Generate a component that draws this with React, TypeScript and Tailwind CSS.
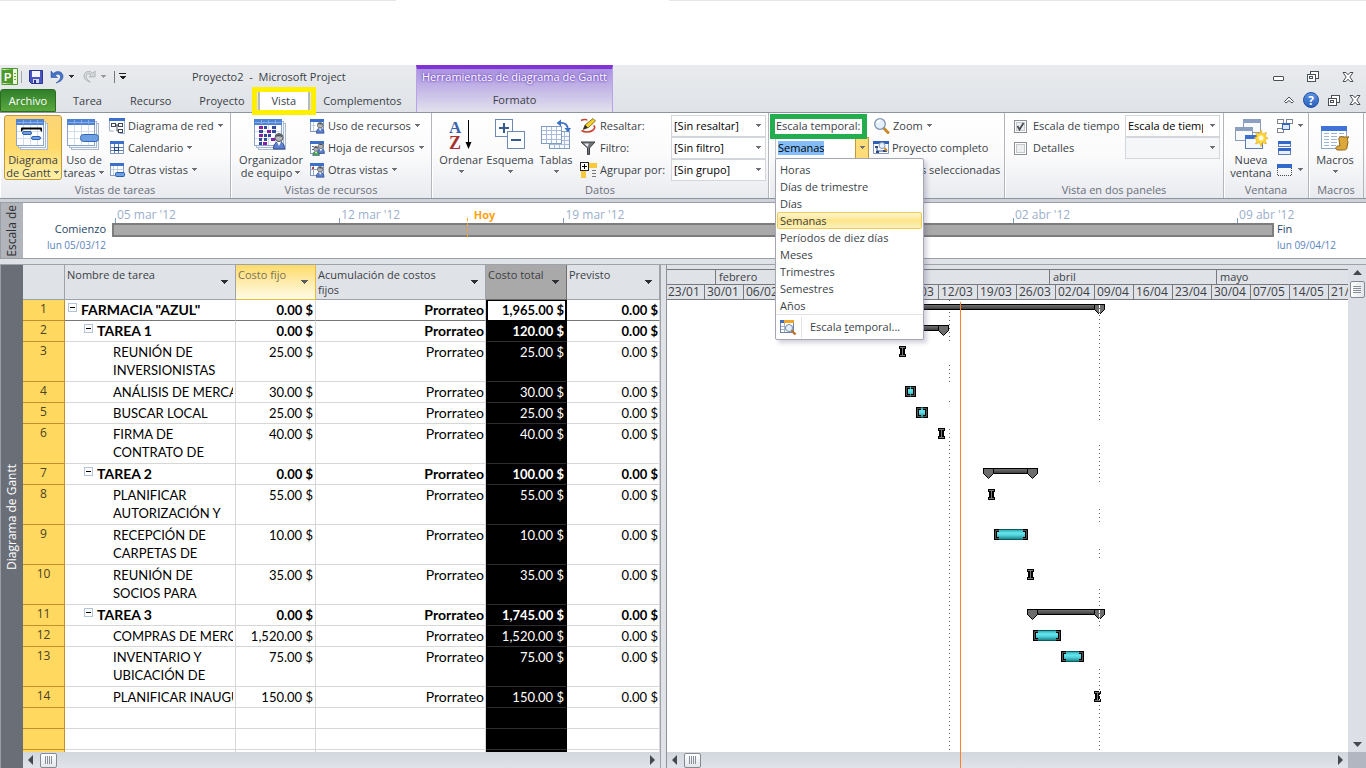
import React from 'react';

type IconProps = { className?: string };

const Caret: React.FC<IconProps> = ({ className = 'text-[#6b6f76]' }) => (
  <svg width="7" height="4" viewBox="0 0 7 4" shapeRendering="crispEdges" className={`shrink-0 ${className}`}><path d="M1 0h5v1H5v1H4v1H3V2H2V1H1z" fill="currentColor" /></svg>
);

const HeadCaret: React.FC<IconProps> = ({ className = '' }) => (
  <svg width="7" height="4" viewBox="0 0 7 4" shapeRendering="crispEdges" className={`shrink-0 ${className}`}><path d="M0 0h7v1H6v1H5v1H4v1H3V3H2V2H1V1H0z" fill="currentColor" /></svg>
);

/* ---------- big ribbon icons ---------- */

const StackedWindow: React.FC<{ children?: React.ReactNode }> = ({ children }) => (
  <svg width="36" height="34" viewBox="0 0 36 34">
    <g fill="#f4f7fb" stroke="#a9b9d0"><rect x="5.500" y="5.500" width="27" height="26" /><rect x="3.500" y="3.500" width="27" height="26" /></g>
    <rect x="1.500" y="1.500" width="27" height="26" fill="#fff" stroke="#8ea6c8" />
    <path d="M1 1h28v6H1z" fill="#4f82d2" />
    <path d="M2 4.500h26M8.500 2v4M15.500 2v4M22.500 2v4" stroke="#86aeea" />
    <path d="M8.500 7v20M15.500 7v20M22.500 7v20M2 13.500h26M2 20.500h26" stroke="#d3deed" />
    {children}
  </svg>
);

const GanttIcon = () => (
  <StackedWindow>
    <path d="M7 10.500h19" stroke="#000" strokeWidth="2" /><path d="M6 9v5l2-2zM27 9v5l-2-2z" />
    <rect x="7.500" y="13.500" width="9" height="3" rx="1.500" fill="#6aa0e6" stroke="#2d5fae" />
    <rect x="16.500" y="18.500" width="9" height="3" rx="1.500" fill="#6aa0e6" stroke="#2d5fae" />
  </StackedWindow>
);

const TaskUsageIcon = () => (
  <StackedWindow>
    <rect x="14.500" y="16.500" width="18" height="7" rx="3" fill="#6d9fe4" stroke="#3566ae" />
  </StackedWindow>
);

const Person: React.FC<{ x: number; y: number; s?: number; body?: string }> = ({ x, y, s = 1, body = '#5c7fd0' }) => (
  <g transform={`translate(${x} ${y}) scale(${s})`}>
    <path d="M0.500 16c0-5 2-7 5.500-7s5.500 2 5.500 7z" fill={body} stroke="#2f4b86" />
    <path d="M4 9l2 4 2-4z" fill="#fff" />
    <circle cx="6" cy="4.500" r="4" fill="#b4b6b8" stroke="#55585c" />
    <path d="M2.500 4C3 1 8 0 9.500 4 7 3.500 5 2.500 2.500 4z" fill="#4b4e52" />
  </g>
);

const TeamPlannerIcon = () => (
  <StackedWindow>
    <g fill="#8a1fa8"><path d="M6 8h4v3H6zM6 16h4v3H6zM10 24h4v3h-4zM14 12h4v3h-4zM18 20h4v3h-4z" /></g>
    <g fill="#2f4a9c"><path d="M11 8h3v3h-3zM19 8h4v3h-4zM6 12h4v3H6zM11 16h3v3h-3zM15 16h3v3h-3zM19 12h4v3h-4zM6 20h3v3H6zM6 24h3v3H6zM11 20h3v3h-3z" /></g>
    <Person x={20} y={15} />
  </StackedWindow>
);

const SortIcon = () => (
  <svg width="26" height="34" viewBox="0 0 26 34">
    <text x="1" y="15" fontSize="17" fontWeight="bold" fill="#3a63ad" fontFamily="Liberation Serif, serif">A</text>
    <text x="1" y="31" fontSize="18" fontWeight="bold" fill="#a83232" fontFamily="Liberation Serif, serif">Z</text>
    <path d="M20.500 2v25" stroke="#000" /><path d="M17.500 24h6l-3 7z" />
  </svg>
);

const OutlineIcon = () => (
  <svg width="32" height="34" viewBox="0 0 32 34">
    <g fill="#fdfefe" stroke="#6b89b3"><rect x="1.500" y="1.500" width="17" height="17" /><rect x="13.500" y="13.500" width="17" height="17" /></g>
    <path d="M5 10h10M10 5v10M17 22h10" stroke="#375a91" strokeWidth="2" />
  </svg>
);

const TablesIcon = () => (
  <svg width="32" height="34" viewBox="0 0 32 34">
    <rect x="9.500" y="13.500" width="20" height="17" fill="#f5f8fc" stroke="#7f9cc3" />
    <path d="M14.500 14v16M19.500 14v16M24.500 14v16M10 18.500h19M10 22.500h19M10 26.500h19" stroke="#a7bcd8" />
    <rect x="1.500" y="8.500" width="20" height="17" fill="#fff" stroke="#7f9cc3" />
    <path d="M6.500 9v16M11.500 9v16M16.500 9v16M2 12.500h19M2 16.500h19M2 21.500h19" stroke="#a7bcd8" />
    <path d="M19 5c6-1 9 2 9 7" fill="none" stroke="#3b72c4" strokeWidth="1.800" /><path d="M21 1.500v7L16.500 5zM24.500 10h6.500l-3 4.500z" fill="#3b72c4" />
  </svg>
);

const NewWindowIcon = () => (
  <svg width="34" height="34" viewBox="0 0 34 34">
    <g fill="#f7f9fc" stroke="#8c9bb3">
      <rect x="9.500" y="1.500" width="17" height="13" /><rect x="1.500" y="9.500" width="17" height="13" />
    </g>
    <path d="M9 1h18v4H9zM1 9h18v4H1z" fill="#8d9fc0" />
    <rect x="11.500" y="17.500" width="17" height="13" fill="#f4f8ff" stroke="#5c7bb0" /><path d="M11 17h18v4H11z" fill="#3d6fd0" />
    <path d="M27 12l1.500 4 4-1.500-1.500 4 3 1.500-3 2 1.500 4-4-1.500-1.500 4-1.500-4-4 1.500 1.500-4-3-2 3-1.500-1.500-4 4 1.500z" fill="#ffd83a" stroke="#e0a31a" strokeWidth=".6" />
    <circle cx="27" cy="20" r="2.500" fill="#fffbe0" />
  </svg>
);

const MacrosIcon = () => (
  <svg width="32" height="34" viewBox="0 0 32 34">
    <rect x="2.500" y="8.500" width="25" height="22" fill="#fff" stroke="#8ea6c8" /><path d="M2 8h26v5H2z" fill="#3f74d6" />
    <path d="M5 15.500h5M12 15.500h6M20 15.500h5M5 18.500h5M12 18.500h6M20 18.500h5M5 21.500h5M12 21.500h6M5 24.500h5M12 24.500h6M5 27.500h5M12 27.500h5" stroke="#9db6da" />
    <path d="M20 22c-1-3 2-4 4-3h6c-2 1-2 3-1 5l-1 5c0 3-2 3-4 3h-6c-2-1-1-4 1-4h2z" fill="#dca83a" stroke="#8f641a" />
  </svg>
);

/* ---------- small 16px icons ---------- */

const MiniWindow: React.FC<{ children?: React.ReactNode }> = ({ children }) => (
  <svg width="16" height="16" viewBox="0 0 16 16" className="shrink-0">
    <rect x="1.500" y="1.500" width="13" height="12" fill="#fff" stroke="#7f9ac2" /><path d="M1 1h14v3H1z" fill="#3a6fcb" />
    {children}
  </svg>
);

const NetworkIcon = () => (
  <svg width="16" height="16" viewBox="0 0 16 16" className="shrink-0">
    <path d="M0 0h16v3H0z" fill="#3a6fcb" /><path d="M0.500 3v10h4M15.500 3v12.500h-5" stroke="#9db0cc" fill="none" />
    <g fill="#fff" stroke="#3c4654"><rect x="2.500" y="5.500" width="4" height="3" /><rect x="9.500" y="5.500" width="4" height="3" /><rect x="9.500" y="11.500" width="4" height="3" /><path d="M6.500 7h3M8 7v6h1.500" fill="none" /></g>
  </svg>
);
const CalendarIcon = () => (
  <MiniWindow><path d="M5.500 4v9M9.500 4v9M1.500 7.500h13M1.500 10.500h13" stroke="#5f7fae" /><path d="M5.500 7.500h4v3h-4z" fill="#dbe8fa" stroke="#1f3f78" /></MiniWindow>
);
const OtherTaskIcon = () => (
  <MiniWindow><path d="M4.500 4v9M8.500 4v9M1.500 7.500h13" stroke="#c1cee0" /><rect x="6.500" y="10.500" width="9" height="4" rx="1" fill="#6d9fe4" stroke="#2d5fae" /></MiniWindow>
);
const ResourceUseIcon = () => (
  <MiniWindow><path d="M4.500 4v9M1.500 7.500h5" stroke="#c1cee0" /><Person x={7} y={4} s={0.700} /></MiniWindow>
);
const ResourceSheetIcon = () => (
  <MiniWindow><path d="M3 6.500h2M3 9.500h2" stroke="#5c6b85" /><Person x={8} y={3} s={0.650} /><Person x={3.500} y={6} s={0.600} body="#4aa84a" /></MiniWindow>
);
const OtherResourceIcon = () => (
  <MiniWindow><path d="M4.500 4v9M1.500 7.500h13" stroke="#8fa3c4" /><path d="M3 5h2v2H3z" fill="#c23a3a" /><Person x={7} y={4} s={0.700} /></MiniWindow>
);
const HighlightIcon = () => (
  <svg width="16" height="16" viewBox="0 0 16 16" className="shrink-0">
    <path d="M1 2.500c3-1.500 6-1 6 0M1.500 12.500c3 2 8 2 11 0s2.500-4.500 1-5" fill="none" stroke="#c8402a" strokeWidth="1.600" />
    <path d="M3.500 11l1.500-4 8-6.500L15.500 3l-7 6.500z" fill="#f6cf2c" stroke="#6b5a16" strokeWidth=".8" /><path d="M3 12l2-5 3 2.500z" fill="#2b2b2b" />
  </svg>
);
const FilterIcon = () => (
  <svg width="16" height="16" viewBox="0 0 16 16" className="shrink-0"><path d="M1 2h14L9.500 8v6.500h-2V8z" fill="#6f7378" stroke="#3c3f43" /><path d="M4 3.500h5L7.500 7z" fill="#e7e9ea" /></svg>
);
const GroupIcon = () => (
  <svg width="17" height="16" viewBox="0 0 17 16" className="shrink-0">
    <path d="M7 1h10v5H7zM1 9h5v7H1z" fill="#f8c93a" /><rect x="0.500" y="0.500" width="8" height="8" fill="#fff" stroke="#222" /><path d="M2 4.500h5M4.500 2v5" stroke="#000" />
    <path d="M9 7h8v9H9z" fill="#f3f3f1" /><path d="M12 8.500h4M12 11.500h4M12 14.500h4" stroke="#777" />
  </svg>
);
const ZoomIcon = () => (
  <svg width="17" height="16" viewBox="0 0 17 16" className="shrink-0"><path d="M10.500 10l4.500 4.500" stroke="#c98a2c" strokeWidth="3" strokeLinecap="round" /><circle cx="7" cy="6" r="5.300" fill="#e4f0fc" stroke="#7e92b0" strokeWidth="1.300" /><path d="M4 5c.5-2 2-2.500 3.500-2.500" stroke="#fff" fill="none" strokeWidth="1.500" /></svg>
);
const EntireProjectIcon = () => (
  <svg width="16" height="16" viewBox="0 0 16 16" className="shrink-0">
    <path d="M0.500 1.500h15v12H.5z" fill="#fff" stroke="#7f9ac2" /><path d="M0 1h16v3H0z" fill="#2f5fb8" /><path d="M2 6h3v2H2zM10 10h4v2h-4zM3 11h3v2H3z" fill="#2b4a86" />
    <circle cx="9" cy="5.500" r="3" fill="#e4f0fc" stroke="#8497b4" /><path d="M11.500 8l2.500 3" stroke="#c98a2c" strokeWidth="2" /><path d="M4 8v3h6" stroke="#2b4a86" fill="none" />
  </svg>
);
const TimescaleIcon = () => (
  <svg width="17" height="17" viewBox="0 0 17 17" className="shrink-0">
    <rect x="0.500" y="1.500" width="13" height="12" fill="#fff" stroke="#6d83a8" /><path d="M0 1h4v3H0z" fill="#3f6fb5" /><path d="M4 1h10v3H4z" fill="#f0a428" />
    <path d="M4.500 4v9M1 7.500h12M1 10.500h12" stroke="#9fb0ca" /><circle cx="9" cy="9" r="3.500" fill="#e4f0fc" stroke="#7c8ca6" /><path d="M11.500 11.500l4 4" stroke="#b8702a" strokeWidth="2.400" />
  </svg>
);

const SwitchWindowsIcon = () => (
  <svg width="17" height="16" viewBox="0 0 17 16" className="shrink-0"><g fill="#fff" stroke="#80858d"><rect x="0.500" y="1.500" width="6" height="4" /><rect x="9.500" y="1.500" width="6" height="4" /><rect x="0.500" y="10.500" width="6" height="4" /></g><rect x="5.500" y="5.500" width="7" height="6" fill="#dfe9fb" stroke="#3465bd" /><path d="M5 5h8v2H5z" fill="#3465bd" /></svg>
);
const ArrangeIcon = () => (
  <svg width="14" height="16" viewBox="0 0 14 16" className="ml-px shrink-0"><g fill="#e9f0fb" stroke="#5f7fb8"><rect x="0.500" y="1.500" width="12" height="5" /><rect x="0.500" y="8.500" width="12" height="6" /></g><path d="M0 1h13v3H0zM0 8h13v3H0z" fill="#3268cc" /></svg>
);
const HideIcon = () => (
  <svg width="17" height="16" viewBox="0 0 17 16" className="shrink-0"><path d="M0 2h15v4H0z" fill="#3268cc" /><path d="M.5 6v7.500h14V6" stroke="#444" strokeDasharray="1 1" fill="none" /></svg>
);

const RestoreIcon = () => (
  <svg width="12" height="11" viewBox="0 0 12 11"><g fill="#fff" stroke="#4b4f56"><rect x="3.500" y="0.500" width="8" height="7" /><rect x="0.500" y="3.500" width="8" height="7" /><rect x="2.500" y="5.500" width="3" height="2" /></g></svg>
);
const CloseIcon = () => (
  <svg width="12" height="10" viewBox="0 0 12 10"><path d="M1 .5h3l2 2.300L8 .5h3L7.800 5 11 9.500H8L6 7.200 4 9.500H1L4.200 5z" fill="#fff" stroke="#4b4f56" /></svg>
);

/* ---------- ribbon pieces ---------- */

const Group: React.FC<{ label: string; className: string; children: React.ReactNode }> = ({ label, className, children }) => (
  <section className={`flex shrink-0 flex-col border-r border-[#b3b7bd] shadow-[inset_1px_0_0_#fff] ${className}`}>
    <div className="flex h-[69px] pt-[2px]">{children}</div>
    <div className="text-center leading-4 text-[#6a6f7a]">{label}</div>
  </section>
);

const BigButton: React.FC<{ icon: React.ReactNode; lines: string[]; className: string; active?: boolean; caret?: 'inline' | 'below' }> = ({ icon, lines, className, active, caret }) => (
  <button className={`flex h-[65px] shrink-0 flex-col items-center rounded-[3px] border ${active ? 'border-[#c29a3e] bg-linear-to-b from-[#fbd477] via-[#ffd968] to-[#fff0a6]' : 'border-transparent'} ${className}`}>
    <span className="flex h-[37px] items-center justify-center">{icon}</span>
    {lines.map((line, i) => (
      <span key={line} className="flex items-center gap-[2px] whitespace-nowrap leading-[13px]">{line}{caret === 'inline' && i === lines.length - 1 && <Caret />}</span>
    ))}
    {caret === 'below' && <span className="flex h-3 items-center"><Caret /></span>}
  </button>
);

const SmallButton: React.FC<{ icon: React.ReactNode; label?: string; caret?: boolean }> = ({ icon, label, caret }) => (
  <button className="flex h-[22px] items-center gap-[3px] whitespace-nowrap">{icon}{label}{caret && <Caret />}</button>
);

const Picker: React.FC<{ id: string; value: string; disabled?: boolean }> = ({ id, value, disabled }) => (
  <div className="relative h-[22px] w-[95px]">
    <select id={id} aria-label={value || 'Detalles'} disabled={disabled} className={`h-full w-full appearance-none border border-[#d3d6db] pr-4 pl-[2px] text-black ${disabled ? 'bg-[#f5f6f8]' : 'bg-white'}`}>
      <option>{value}</option>
    </select>
    <Caret className="pointer-events-none absolute top-[9px] right-1 text-[#6b6f76]" />
  </div>
);

const CheckRow: React.FC<{ id: string; label: string; checked?: boolean }> = ({ id, label, checked }) => (
  <label htmlFor={id} className="flex h-[22px] items-center gap-[6px] whitespace-nowrap">
    <span className="relative flex">
      <input id={id} type="checkbox" defaultChecked={checked} className="peer h-[13px] w-[13px] appearance-none border border-[#8c9096] bg-[#eceef0] shadow-[inset_0_0_0_1px_#fff,inset_0_0_0_2px_#c5c9ce]" />
      <svg width="13" height="13" viewBox="0 0 13 13" className="pointer-events-none absolute inset-0 hidden peer-checked:block"><path d="M3.500 6l2 3.500L9.500 3" fill="none" stroke="#444952" strokeWidth="1.700" /></svg>
    </span>
    {label}
  </label>
);

const SCALES = ['Horas', 'Días de trimestre', 'Días', 'Semanas', 'Períodos de diez días', 'Meses', 'Trimestres', 'Semestres', 'Años'];

const ScaleMenu = () => (
  <div className="absolute top-full -left-px z-20 w-[149px] rounded-[2px] border border-[#a5a8b0] bg-white pt-[2px] shadow-[3px_3px_4px_rgba(80,70,120,0.25)]">
    <ul className="px-px">
      {SCALES.map((scale) => (
        <li key={scale}>
          <button className={`block h-[17px] w-full rounded-[2px] border px-[2px] text-left leading-[15px] ${scale === 'Semanas' ? 'border-[#f0cc52] bg-linear-to-b from-[#fff6d2] via-[#fde58c] to-[#fff1b8]' : 'border-transparent'}`}>{scale}</button>
        </li>
      ))}
    </ul>
    <button className="flex h-[25px] w-full items-center border-t border-[#e2e4e7] pl-1">
      <TimescaleIcon /><span className="ml-1 h-[21px] border-l border-[#e2e4e7]" /><span className="ml-2">Escala <u>t</u>emporal...</span>
    </button>
  </div>
);

const TABS = ['Tarea', 'Recurso', 'Proyecto', 'Vista', 'Complementos'];

const TitleBar = () => (
  <header className="flex h-12 shrink-0 border-b border-[#8f959d] bg-linear-to-b from-[#e9ebee] to-[#dfe3e7]">
    <div className="flex w-[416px] shrink-0 flex-col">
      <div className="flex h-6 items-center">
        <svg width="17" height="17" viewBox="0 0 17 17" className="ml-px"><path d="M1 .5h15.500v16H1z" fill="#eff7e5" stroke="#4c9a2a" /><path d="M1 2l11-1v15L1 15z" fill="#4c9a2a" /><path d="M13 5.500h2M13 8.500h2M13 11.500h2" stroke="#6aa53a" /><text x="3" y="12.500" fontSize="11" fontWeight="bold" fill="#fff" fontFamily="Liberation Sans, sans-serif">P</text></svg>
        <span className="ml-[3px] h-3 w-px bg-[#a4a8ae]" />
        <svg width="14" height="14" viewBox="0 0 14 14" className="ml-[7px]"><path d="M.5.5h13v13h-11l-2-2z" fill="#4a55c4" stroke="#2b3490" /><path d="M3 1h8v6H3z" fill="#f4f6fc" /><path d="M4 9h6v4H4z" fill="#d6daf0" /><path d="M5 10h2v3H5z" fill="#2b3490" /></svg>
        <svg width="14" height="14" viewBox="0 0 14 14" className="ml-[7px]"><path d="M1 1v6.500h6.500L5.300 5.300C8 3 11 4.500 10.500 7.500 10.200 10 8 11.500 6 13c4-1 7-3 7-6.500C13 1.500 7 0 3.500 3.500z" fill="#4472c8" stroke="#2f559e" strokeWidth=".6" /></svg>
        <Caret className="ml-1 text-[#333]" />
        <svg width="13" height="13" viewBox="0 0 14 14" className="ml-2"><path d="M13 1v6.500H6.500l2.200-2.200C6 3 3 4.500 3.500 7.500 3.800 10 6 11.500 8 13 4 12 1 10 1 6.500 1 1.500 7 0 10.500 3.500z" fill="#d4d7da" stroke="#a6aab0" strokeWidth=".8" /></svg>
        <Caret className="ml-1 text-[#999]" />
        <span className="ml-[7px] h-3 w-px bg-[#777]" />
        <svg width="7" height="7" viewBox="0 0 7 7" className="ml-1" shapeRendering="crispEdges"><path d="M0 0h7v1H0zM0 3h7L3.500 6.500z" fill="#222" /></svg>
        <h1 className="ml-[66px] whitespace-pre">Proyecto2  -  Microsoft Project</h1>
      </div>
      <nav className="flex h-6">
        <button className="mr-[3px] w-[56px] rounded-t-[3px] border border-[#2b6b22] bg-linear-to-b from-[#2f7f2b] to-[#5aa83d] pt-px text-white">Archivo</button>
        {TABS.map((tab) => tab === 'Vista' ? (
          <button key={tab} className="relative px-[13px] pt-px">
            <span className="absolute top-0 -left-px h-[23px] w-[52px] border-x-2 border-[#b5b9c0] bg-white" />
            <span className="absolute -top-[2px] -right-[7px] -bottom-[3px] -left-[7px] z-10 border-[5px] border-[#fff000]" />
            <span className="relative">{tab}</span>
          </button>
        ) : <button key={tab} className="px-[14px] pt-px">{tab}</button>)}
      </nav>
    </div>
    <div className="flex w-[197px] shrink-0 flex-col border-x border-[#b9a2e6] border-t-4 border-t-[#8233d8] bg-linear-to-b from-[#ab92e0] to-[#e2e2ec]">
      <div className="flex h-[17px] shrink-0 items-center justify-center whitespace-nowrap font-medium text-white [text-shadow:0_0_3px_#6a3fc0,0_0_2px_#6a3fc0]">Herramientas de diagrama de Gantt</div>
      <button className="flex-1 pt-[3px]">Formato</button>
    </div>
    <div className="flex flex-1 flex-col items-end">
      <div className="flex h-6 items-center gap-[23px] pr-3">
        <button aria-label="Minimizar" className="mt-1 h-[5px] w-[11px] rounded-[1px] border border-[#4b4f56] bg-white" />
        <button aria-label="Restaurar"><RestoreIcon /></button>
        <button aria-label="Cerrar"><CloseIcon /></button>
      </div>
      <div className="flex h-6 items-center gap-[9px] pr-[5px]">
        <button aria-label="Contraer"><svg width="10" height="8" viewBox="0 0 10 8"><path d="M.5 5.500L5 1l4.500 4.500L8 7 5 4.500 2 7z" fill="#fff" stroke="#4b4f56" /></svg></button>
        <button aria-label="Ayuda" className="h-4 w-4 rounded-full border border-[#1f4fa0] bg-linear-to-b from-[#5d93e0] to-[#2a60bd] text-[12px] leading-[13px] font-bold text-white">?</button>
        <button aria-label="Restaurar proyecto"><RestoreIcon /></button>
        <button aria-label="Cerrar proyecto"><CloseIcon /></button>
      </div>
    </div>
  </header>
);

const Ribbon = () => (
  <div className="flex h-[86px] shrink-0 border-b border-[#8f959d] bg-linear-to-b from-white via-[#fbfbfc] to-[#e8eaef]">
    <Group label="Vistas de tareas" className="w-[231px]">
      <BigButton icon={<GanttIcon />} lines={['Diagrama', 'de Gantt']} caret="inline" active className="ml-1 w-[58px]" />
      <BigButton icon={<TaskUsageIcon />} lines={['Uso de', 'tareas']} caret="inline" className="w-[44px]" />
      <div className="ml-[3px] flex flex-col">
        <SmallButton icon={<NetworkIcon />} label="Diagrama de red" caret />
        <SmallButton icon={<CalendarIcon />} label="Calendario" caret />
        <SmallButton icon={<OtherTaskIcon />} label="Otras vistas" caret />
      </div>
    </Group>
    <Group label="Vistas de recursos" className="w-[201px]">
      <BigButton icon={<TeamPlannerIcon />} lines={['Organizador', 'de equipo']} caret="inline" className="ml-[5px] w-[70px]" />
      <div className="ml-[3px] flex flex-col">
        <SmallButton icon={<ResourceUseIcon />} label="Uso de recursos" caret />
        <SmallButton icon={<ResourceSheetIcon />} label="Hoja de recursos" caret />
        <SmallButton icon={<OtherResourceIcon />} label="Otras vistas" caret />
      </div>
    </Group>
    <Group label="Datos" className="w-[337px]">
      <BigButton icon={<SortIcon />} lines={['Ordenar']} caret="below" className="ml-1 w-[50px]" />
      <BigButton icon={<OutlineIcon />} lines={['Esquema']} caret="below" className="w-[48px]" />
      <BigButton icon={<TablesIcon />} lines={['Tablas']} caret="below" className="w-[44px]" />
      <div className="ml-[2px] flex w-[91px] flex-col">
        <label htmlFor="resaltar" className="flex h-[22px] items-center gap-1"><HighlightIcon />Resaltar:</label>
        <label htmlFor="filtro" className="flex h-[22px] items-center gap-1"><FilterIcon />Filtro:</label>
        <label htmlFor="agrupar" className="flex h-[22px] items-center gap-[3px] whitespace-nowrap"><GroupIcon />Agrupar por:</label>
      </div>
      <div className="flex flex-col">
        <Picker id="resaltar" value="[Sin resaltar]" />
        <Picker id="filtro" value="[Sin filtro]" />
        <Picker id="agrupar" value="[Sin grupo]" />
      </div>
    </Group>
    <Group label="Zoom" className="w-[236px]">
      <div className="ml-[6px] w-[94px]">
        <label htmlFor="escala" className="relative flex h-[22px] items-center pl-px whitespace-nowrap">
          <span className="absolute -top-px right-[2px] -bottom-[2px] -left-[5px] z-10 border-[5px] border-[#22ae4c]" />Escala temporal:
        </label>
        <div className="relative flex h-[22px] border border-[#c3c7cc] bg-white">
          <input id="escala" defaultValue="Semanas" className="my-[3px] ml-[2px] w-[46px] bg-[#83bdf9] text-black" />
          <button aria-label="Abrir lista" className="-my-px -mr-px ml-auto flex w-[14px] items-center justify-center border border-[#c29a3e] bg-[#ffdc78]"><Caret /></button>
          <ScaleMenu />
        </div>
      </div>
      <div className="ml-1 flex flex-col">
        <SmallButton icon={<ZoomIcon />} label="Zoom" caret />
        <SmallButton icon={<EntireProjectIcon />} label="Proyecto completo" />
        <SmallButton icon={<EntireProjectIcon />} label="Tareas seleccionadas" />
      </div>
    </Group>
    <Group label="Vista en dos paneles" className="w-[219px]">
      <div className="ml-[9px] w-[111px]">
        <CheckRow id="chk-tiempo" label="Escala de tiempo" checked />
        <CheckRow id="chk-detalles" label="Detalles" />
      </div>
      <div>
        <Picker id="vista-tiempo" value="Escala de tiempo" />
        <Picker id="vista-detalles" value="" disabled />
      </div>
    </Group>
    <Group label="Ventana" className="w-[85px]">
      <BigButton icon={<NewWindowIcon />} lines={['Nueva', 'ventana']} className="ml-1 w-[46px]" />
      <div className="ml-[3px] flex flex-col">
        <SmallButton icon={<SwitchWindowsIcon />} caret />
        <SmallButton icon={<ArrangeIcon />} />
        <SmallButton icon={<HideIcon />} caret />
      </div>
    </Group>
    <Group label="Macros" className="w-[55px]">
      <BigButton icon={<MacrosIcon />} lines={['Macros']} caret="below" className="ml-[2px] w-[48px]" />
    </Group>
  </div>
);

/* ---------- timeline strip ---------- */

const TICKS = [
  { at: 3, label: "05 mar '12" },
  { at: 228, label: "12 mar '12" },
  { at: 453, label: "19 mar '12" },
  { at: 904, label: "02 abr '12" },
  { at: 1129, label: "09 abr '12" },
];
const SPAN = 1162;

const Timeline = () => (
  <section className="flex h-[57px] shrink-0 border-y border-l border-[#9a9ea5] bg-white">
    <div className="flex w-[22px] items-center justify-center overflow-hidden bg-[#b1b4ba]">
      <span className="rotate-180 text-[12px] leading-[22px] whitespace-nowrap text-[#2e3035] [writing-mode:vertical-rl]">Escala de</span>
    </div>
    <div className="w-[89px] pt-[18px] pr-[6px] text-right leading-4 text-[#1d4567]">Comienzo<div className="text-[10px] text-[#5a84be]">lun 05/03/12</div></div>
    <div className="relative mt-5 h-[14px] flex-1 border-2 border-[#7d7d7d] bg-[#a9a9a9]">
      {TICKS.map((tick) => (
        <span key={tick.label} className="absolute -top-[17px] h-[15px] whitespace-nowrap text-[12px] leading-[14px] text-[#9bafcc]" style={{ left: `${(tick.at / SPAN) * 100}%` }}>
          <span className="absolute -left-[2px] bottom-0 h-[5px] w-px bg-[#7f9cc4]" />{tick.label}
        </span>
      ))}
      <span className="absolute -top-[17px] text-[11px] leading-[14px] font-bold text-[#ffa311]" style={{ left: `${(361 / SPAN) * 100}%` }}>
        Hoy<span className="absolute top-[10px] -left-[7px] h-[19px] border-l border-dashed border-[#ffa311]" />
      </span>
    </div>
    <div className="w-[92px] pt-[18px] pl-[3px] leading-4 text-[#1d4567]">Fin<div className="text-[10px] text-[#5a84be]">lun 09/04/12</div></div>
  </section>
);

/* ---------- cost table ---------- */

type Task = { name: string[]; level: number; fixed: string; total: string };

const TASKS: Task[] = [
  { name: ['FARMACIA "AZUL"'], level: 0, fixed: '0.00 $', total: '1,965.00 $' },
  { name: ['TAREA 1'], level: 1, fixed: '0.00 $', total: '120.00 $' },
  { name: ['REUNIÓN DE', 'INVERSIONISTAS'], level: 2, fixed: '25.00 $', total: '25.00 $' },
  { name: ['ANÁLISIS DE MERCA'], level: 2, fixed: '30.00 $', total: '30.00 $' },
  { name: ['BUSCAR LOCAL'], level: 2, fixed: '25.00 $', total: '25.00 $' },
  { name: ['FIRMA DE', 'CONTRATO DE'], level: 2, fixed: '40.00 $', total: '40.00 $' },
  { name: ['TAREA 2'], level: 1, fixed: '0.00 $', total: '100.00 $' },
  { name: ['PLANIFICAR', 'AUTORIZACIÓN Y'], level: 2, fixed: '55.00 $', total: '55.00 $' },
  { name: ['RECEPCIÓN DE', 'CARPETAS DE'], level: 2, fixed: '10.00 $', total: '10.00 $' },
  { name: ['REUNIÓN DE', 'SOCIOS PARA'], level: 2, fixed: '35.00 $', total: '35.00 $' },
  { name: ['TAREA 3'], level: 1, fixed: '0.00 $', total: '1,745.00 $' },
  { name: ['COMPRAS DE MERCA'], level: 2, fixed: '1,520.00 $', total: '1,520.00 $' },
  { name: ['INVENTARIO Y', 'UBICACIÓN DE'], level: 2, fixed: '75.00 $', total: '75.00 $' },
  { name: ['PLANIFICAR INAUGU'], level: 2, fixed: '150.00 $', total: '150.00 $' },
];

const INDENT = ['pl-[3px] text-[14px]', 'pl-[19px] text-[14px]', 'pl-[48px]'];

const Head: React.FC<{ label: string; className?: string; arrow?: string }> = ({ label, className = 'border-[#9ea2a9] bg-[#dfe2e7] text-[#3c3f45]', arrow = 'text-[#2c2e32]' }) => (
  <th scope="col" className={`h-[35px] border-r border-b p-0 font-normal ${className}`}>
    <div className="flex h-[34px] justify-between pr-[7px] pl-[2px] pt-[2px] text-left leading-[15px]">
      <span className="max-w-[136px]">{label}</span><HeadCaret className={`mt-[13px] ${arrow}`} />
    </div>
  </th>
);

const ScrollBar = () => (
  <div className="flex h-4 shrink-0 items-center justify-between bg-linear-to-b from-[#d2d6dd] to-[#e0e4ea] px-[5px]">
    <div className="flex items-center gap-[7px]">
      <svg width="5" height="10" viewBox="0 0 5 10"><path d="M5 0v10L0 5z" fill="#45484e" /></svg>
      <span className="flex h-[15px] w-[17px] items-center justify-center gap-px rounded-[2px] border border-[#868a93] bg-linear-to-b from-white to-[#e2e5ea]">
        {[0, 1, 2, 3].map((n) => <span key={n} className="h-2 w-px bg-[#8a8e96]" />)}
      </span>
    </div>
    <svg width="5" height="10" viewBox="0 0 5 10"><path d="M0 0v10l5-5z" fill="#45484e" /></svg>
  </div>
);

const CostTable = () => (
  <div className="flex w-[638px] shrink-0 flex-col border-r border-[#9ea2a9] bg-white">
    <div className="min-h-0 flex-1 overflow-hidden">
      <table className="w-full table-fixed border-separate border-spacing-0">
        <colgroup><col className="w-[42px]" /><col className="w-[171px]" /><col className="w-[80px]" /><col className="w-[170px]" /><col className="w-[81px]" /><col /></colgroup>
        <thead>
          <tr>
            <th aria-label="Id" className="border-r border-b border-[#9ea2a9] bg-[#dfe2e7]" />
            <Head label="Nombre de tarea" />
            <Head label="Costo fijo" className="border-[#e9bb3c] bg-linear-to-b from-[#ffdb66] to-[#fffbe6] text-[#7c7150]" arrow="text-[#5a5d62]" />
            <Head label="Acumulación de costos fijos" />
            <Head label="Costo total" className="border-[#6e6e6e] bg-[#a9a9a9] text-[#3c3f45]" />
            <Head label="Previsto" />
          </tr>
        </thead>
        <tbody className="font-[Lato,sans-serif] text-[13px] leading-[18px] text-black">
          {TASKS.map((task, i) => {
            const cell = `${task.name.length > 1 ? 'h-10' : 'h-[21px]'} border-r border-b p-0 pt-px align-top ${i === 0 ? 'border-b-[#777] border-r-[#d7d7d7]' : 'border-[#d7d7d7]'}`;
            return (
              <tr key={i} className={task.level < 2 ? 'font-bold' : ''}>
                <th scope="row" className="border-r border-b border-[#c28f2c] bg-[#ffd85f] p-0 text-center align-top font-[Open_Sans,sans-serif] text-[12px] font-normal text-[#4a4126]">{i + 1}</th>
                <td className={`${cell} pr-[2px]`}>
                  <div className={`flex overflow-hidden whitespace-nowrap ${INDENT[task.level]}`}>
                    {task.level < 2 && <button aria-label="Contraer" className="mt-[2px] mr-[4px] flex h-[9px] w-[9px] shrink-0 items-center justify-center border border-[#b4c4d8]"><span className="h-px w-[5px] bg-black" /></button>}
                    <div>{task.name.map((line) => <div key={line}>{line}</div>)}</div>
                  </div>
                </td>
                <td className={`${cell} pr-[2px] text-right`}>{task.fixed}</td>
                <td className={`${cell} pr-px text-right text-[14px]`}>Prorrateo</td>
                <td className={i === 0 ? 'border-x-2 border-y border-black p-0 pr-px text-right align-top' : 'border-r border-b border-l-2 border-r-black border-b-[#2e2e2e] border-l-black bg-black p-0 pt-px pr-[2px] text-right align-top text-white'}>{task.total}</td>
                <td className={`${cell} pr-px text-right`}>0.00 $</td>
              </tr>
            );
          })}
          {[0, 1, 2].map((n) => (
            <tr key={`blank-${n}`}>
              <th className="h-[21px] border-r border-b border-[#c28f2c] bg-[#ffd85f] p-0" />
              <td className="border-r border-b border-[#d7d7d7]" /><td className="border-r border-b border-[#d7d7d7]" /><td className="border-r border-b border-[#d7d7d7]" />
              <td className="border-b border-[#2e2e2e] bg-black" />
              <td className="border-r border-b border-[#d7d7d7]" />
            </tr>
          ))}
        </tbody>
      </table>
    </div>
    <ScrollBar />
  </div>
);

/* ---------- gantt chart ---------- */

const WEEKS = ['30/01', '06/02', '13/02', '20/02', '27/02', '05/03', '12/03', '19/03', '26/03', '02/04', '09/04', '16/04', '23/04', '30/04', '07/05', '14/05', '21/05'];

const Summary: React.FC<{ x: number; y: number; w: number }> = ({ x, y, w }) => (
  <g transform={`translate(${x} ${y})`} stroke="#000">
    <rect x="0.500" y="0.500" width={w - 1} height="5" fill="url(#dark)" />
    <path d="M.5.500h10v5l-5 5-5-5z" fill="#6d6d6d" />
    <path d={`M${w - 10.500}.500h10v5l-5 5-5-5z`} fill="#6d6d6d" />
  </g>
);

const Bar: React.FC<{ x: number; y: number; w: number }> = ({ x, y, w }) => {
  const caps = `M5 1.500H1.500v8H5M${w - 5} 1.500H${w - 1.500}v8H${w - 5}`;
  return (
    <g transform={`translate(${x} ${y})`}>
      <rect x="0.500" y="0.500" width={w - 1} height="10" fill="url(#cyan)" stroke="#0d5a60" />
      <path d={caps} fill="none" stroke="#000" strokeWidth="3" />
      <path d={caps} fill="none" stroke="#555" />
    </g>
  );
};

const Tiny: React.FC<{ x: number; y: number }> = ({ x, y }) => (
  <g transform={`translate(${x} ${y})`}><path d="M0 0h7v3H6v5h1v3H0V8h1V3H0z" /><path d="M3.500 2v7M1 1.500h5M1 9.500h5" stroke="#777" /></g>
);

const DOTS = [
  'M282.500 0v42M282.500 65v18M282.500 101v1M282.500 129v323',
  'M432.500 15v107M432.500 145v37M432.500 209v13M432.500 249v10M432.500 289v37M432.500 369v83',
];

const GanttChart = () => (
  <div className="relative flex min-w-0 flex-1 flex-col border-l border-[#8f9298] bg-white">
    <div className="h-[35px] shrink-0 overflow-hidden border-b border-[#77797e] bg-[#dfe2e7] pt-1 text-[#3c3f45]">
      <div className="flex h-[16px] border-y border-[#77797e] leading-[14px]">
        <span className="w-[49px] shrink-0 border-r border-[#77797e]" />
        <span className="w-[162px] shrink-0 border-r border-[#77797e] pl-[3px]">febrero</span>
        <span className="w-[172px] shrink-0 border-r border-[#77797e] pl-[3px]">marzo</span>
        <span className="w-[167px] shrink-0 border-r border-[#77797e] pl-[3px]">abril</span>
        <span className="flex-1 pl-[3px]">mayo</span>
      </div>
      <div className="flex h-[14px] text-[12px] leading-[14px]">
        <span className="w-[38px] shrink-0 border-r border-[#77797e] pl-px">23/01</span>
        {WEEKS.map((week) => <span key={week} className="w-[39px] shrink-0 border-r border-[#77797e] pl-[2px]">{week}</span>)}
      </div>
    </div>
    <svg className="min-h-0 w-full flex-1">
      <defs>
        <linearGradient id="dark" x1="0" y1="0" x2="0" y2="1"><stop offset="0" stopColor="#777" /><stop offset="1" stopColor="#3a3a3a" /></linearGradient>
        <linearGradient id="cyan" x1="0" y1="0" x2="0" y2="1"><stop offset="0" stopColor="#2aa4ac" /><stop offset=".35" stopColor="#66e6ee" /><stop offset=".6" stopColor="#4fd0d8" /><stop offset="1" stopColor="#157a82" /></linearGradient>
      </defs>
      {DOTS.map((d) => <path key={d} d={d} stroke="#666" strokeDasharray="1 3" />)}
      <Summary x={225} y={4} w={213} />
      <Summary x={225} y={25} w={57} />
      <Tiny x={232} y={46} />
      <Bar x={238} y={86} w={11} />
      <Bar x={249} y={107} w={12} />
      <Tiny x={271} y={128} />
      <Summary x={316} y={168} w={55} />
      <Tiny x={321} y={189} />
      <Bar x={327} y={229} w={34} />
      <Tiny x={360} y={269} />
      <Summary x={360} y={309} w={78} />
      <Bar x={366} y={330} w={28} />
      <Bar x={394} y={351} w={23} />
      <Tiny x={427} y={391} />
      <path d="M432.500 5v10M432.500 310v10" stroke="#fff" strokeDasharray="3 1" />
      <path d="M432.500 391v11" stroke="#fff" strokeDasharray="1 3" />
    </svg>
    <ScrollBar />
    <span className="absolute top-[37px] bottom-0 left-[293px] w-px bg-[#ff7f27]" />
  </div>
);

const VerticalScroll = () => (
  <div className="flex w-[18px] shrink-0 flex-col items-center bg-[#dce0e6]">
    <svg width="9" height="5" viewBox="0 0 9 5" className="mt-[5px] shrink-0"><path d="M0 5h9L4.500 0z" fill="#45484e" /></svg>
    <span className="mt-[6px] flex h-[17px] w-[15px] shrink-0 flex-col items-center justify-center gap-px rounded-[2px] border border-[#868a93] bg-linear-to-r from-white to-[#e2e5ea]">
      {[0, 1, 2, 3].map((n) => <span key={n} className="h-px w-2 bg-[#8a8e96]" />)}
    </span>
    <svg width="9" height="5" viewBox="0 0 9 5" className="mt-auto mb-[5px] shrink-0"><path d="M0 0h9L4.500 5z" fill="#45484e" /></svg>
    <span className="h-4 w-full shrink-0 bg-[#b2b6c0]" />
  </div>
);

export default function App() {
  return (
    <div className="flex h-screen flex-col overflow-hidden bg-[#dfe2e7] font-[Open_Sans,Noto_Sans,sans-serif] text-[11px] text-[#3b3f46]">
      <div className="flex h-[65px] shrink-0 justify-between bg-white">
        <span className="h-px w-[29%] bg-[#e6e6e6]" /><span className="h-px w-[51%] bg-[#e6e6e6]" />
      </div>
      <TitleBar />
      <Ribbon />
      <div className="h-[3px] shrink-0 bg-[#cdd1d8]" />
      <Timeline />
      <main className="mt-[5px] flex min-h-0 flex-1 border-t border-[#9ea2a9]">
        <div className="flex w-[23px] shrink-0 items-center justify-center border-l border-[#9a9ea5] bg-[#6a6e76]">
          <span className="rotate-180 text-[12px] leading-[22px] whitespace-nowrap text-white [writing-mode:vertical-rl]">Diagrama de Gantt</span>
        </div>
        <CostTable />
        <div className="w-[5px] shrink-0 bg-[#dfe2e7]" />
        <GanttChart />
        <VerticalScroll />
      </main>
    </div>
  );
}
